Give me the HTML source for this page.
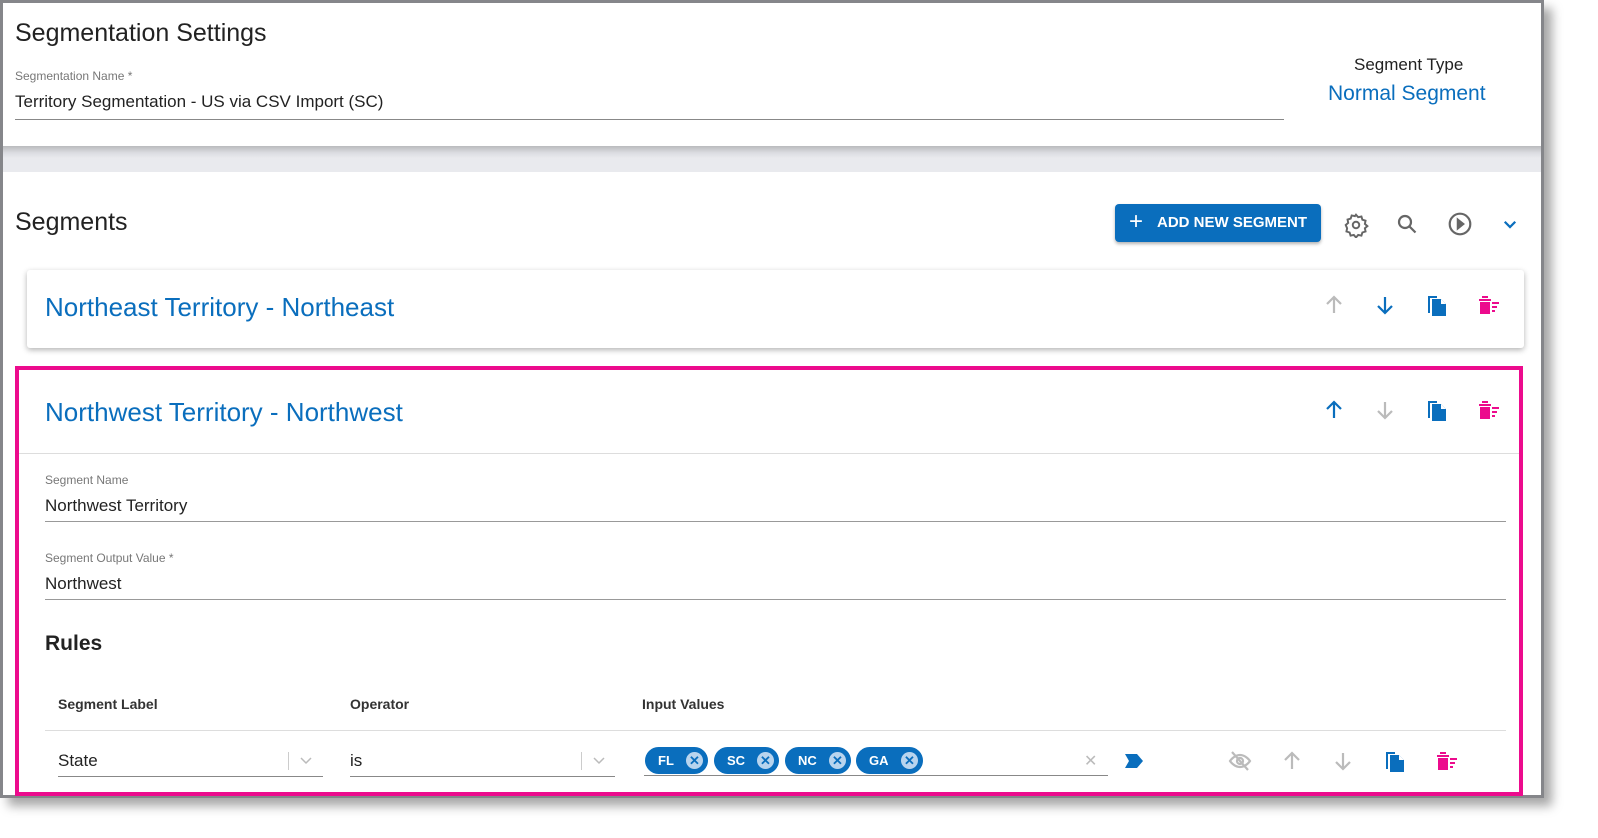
<!DOCTYPE html>
<html style="width:1598px;height:838px;overflow:hidden"><head><style>
*{box-sizing:border-box;margin:0;padding:0}
html,body{width:1598px;height:838px;overflow:hidden}
body{background:#fff;font-family:"Liberation Sans",sans-serif;position:relative;color:#222}
.frame{position:absolute;left:0;top:0;width:1544px;height:798px;border:3px solid #85868a;background:#fff;box-shadow:8px 8px 10px rgba(0,0,0,.35)}
.abs{position:absolute}
.band{position:absolute;left:0;top:143px;width:1538px;height:26px;background:linear-gradient(#b9babd 0,#dcdde2 7px,#e9eaee 12px)}
.lbl{font-size:12px;color:#777}
.val{font-size:17px;color:#222}
.line{position:absolute;height:1px;background:#888}
.blue{color:#0a6ebd}
.card{position:absolute;left:27px;top:270px;width:1497px;height:78px;background:#fff;box-shadow:0 2px 6px rgba(0,0,0,.3);border-radius:3px}
.pink{position:absolute;left:15px;top:366px;width:1508px;height:430px;border:4px solid #ec0b8d}
.chip{position:absolute;top:747px;height:27px;border-radius:14px;background:#0a6ebd;color:#fff;font-size:13px;font-weight:bold;padding-left:13px;line-height:27px}
.chip i{position:absolute;right:5px;top:5px;width:17px;height:17px;border-radius:50%;background:#b8d4ee;color:#0a6ebd;font-style:normal;font-size:13px;line-height:17px;text-align:center}
</style></head><body>
<div class="frame">
<div class="abs" style="left:12px;top:16px;font-size:25px;color:#222">Segmentation Settings</div>
<div class="abs lbl" style="left:12px;top:66px">Segmentation Name *</div>
<div class="abs val" style="left:12px;top:89px">Territory Segmentation - US via CSV Import (SC)</div>
<div class="line" style="left:12px;top:116px;width:1269px"></div>
<div class="abs" style="left:1351px;top:52px;font-size:17px">Segment Type</div>
<div class="abs blue" style="left:1325px;top:79px;font-size:21px">Normal Segment</div>
<div class="band"></div>
<div class="abs" style="left:12px;top:205px;font-size:25px">Segments</div>
<div class="abs" style="left:1112px;top:201px;width:206px;height:38px;background:#0a6ebd;border-radius:4px;color:#fff;font-weight:bold;font-size:15px;line-height:38px;padding-left:42px;box-shadow:0 2px 3px rgba(0,0,0,.3)">ADD NEW SEGMENT<span style="position:absolute;left:14px;top:-1px;font-size:24px;font-weight:normal">+</span></div>
<svg class="abs" style="left:1340px;top:209px" width="26" height="26" viewBox="0 0 24 24" fill="none" stroke="#666" stroke-width="1.8"><circle cx="12" cy="12" r="3"/><path d="M12 2.5l2 2.3 3-.6.9 2.9 2.9.9-.6 3 2.3 2-2.3 2 .6 3-2.9.9-.9 2.9-3-.6-2 2.3-2-2.3-3 .6-.9-2.9-2.9-.9.6-3L2.5 12l2.3-2-.6-3 2.9-.9.9-2.9 3 .6z"/></svg>
<svg class="abs" style="left:1392px;top:209px" width="24" height="24" viewBox="0 0 24 24" fill="none" stroke="#666" stroke-width="2.2"><circle cx="10" cy="10" r="6"/><path d="M14.5 14.5l6 6"/></svg>
<svg class="abs" style="left:1444px;top:208px" width="26" height="26" viewBox="0 0 24 24" fill="none" stroke="#666" stroke-width="2"><circle cx="12" cy="12" r="9.5"/><path d="M10 8l5 4-5 4z" fill="#666"/></svg>
<svg class="abs" style="left:1498px;top:212px" width="18" height="18" viewBox="0 0 24 24" fill="none" stroke="#0a6ebd" stroke-width="3"><path d="M5 9l7 7 7-7"/></svg>
</div>

<div class="card">
<div class="abs blue" style="left:18px;top:22px;font-size:26px">Northeast Territory - Northeast</div>
</div>
<div class="pink"></div>
<div class="abs blue" style="left:45px;top:397px;font-size:26px">Northwest Territory - Northwest</div>
<div class="abs" style="left:19px;top:453px;width:1500px;height:1px;background:#ddd"></div>
<div class="abs lbl" style="left:45px;top:473px">Segment Name</div>
<div class="abs val" style="left:45px;top:496px">Northwest Territory</div>
<div class="line" style="left:45px;top:521px;width:1461px;background:#999"></div>
<div class="abs lbl" style="left:45px;top:551px">Segment Output Value *</div>
<div class="abs val" style="left:45px;top:574px">Northwest</div>
<div class="line" style="left:45px;top:599px;width:1461px;background:#999"></div>
<div class="abs" style="left:45px;top:632px;font-size:21px;font-weight:bold;color:#222">Rules</div>
<div class="abs" style="left:58px;top:696px;font-size:14px;font-weight:bold;color:#333">Segment Label</div>
<div class="abs" style="left:350px;top:696px;font-size:14px;font-weight:bold;color:#333">Operator</div>
<div class="abs" style="left:642px;top:696px;font-size:14px;font-weight:bold;color:#333">Input Values</div>
<div class="abs" style="left:45px;top:730px;width:1461px;height:1px;background:#ddd"></div>
<div class="abs val" style="left:58px;top:751px">State</div>
<div class="abs" style="left:288px;top:752px;width:1px;height:18px;background:#ccc"></div>
<svg class="abs" style="left:299px;top:755px" width="14" height="10" viewBox="0 0 14 10" fill="none" stroke="#bbb" stroke-width="1.5"><path d="M2 3l5 5 5-5"/></svg>
<div class="line" style="left:58px;top:776px;width:265px"></div>
<div class="abs val" style="left:350px;top:751px">is</div>
<div class="abs" style="left:581px;top:752px;width:1px;height:18px;background:#ccc"></div>
<svg class="abs" style="left:592px;top:755px" width="14" height="10" viewBox="0 0 14 10" fill="none" stroke="#bbb" stroke-width="1.5"><path d="M2 3l5 5 5-5"/></svg>
<div class="line" style="left:350px;top:776px;width:265px"></div>
<div class="chip" style="left:645px;width:63px">FL<i>✕</i></div>
<div class="chip" style="left:714px;width:65px">SC<i>✕</i></div>
<div class="chip" style="left:785px;width:66px">NC<i>✕</i></div>
<div class="chip" style="left:856px;width:67px">GA<i>✕</i></div>
<div class="abs" style="left:1084px;top:751px;color:#bbb;font-size:16px">✕</div>
<div class="line" style="left:644px;top:775px;width:464px"></div>
<svg class="abs" style="left:1124px;top:753px" width="20" height="16" viewBox="0 0 20 16"><path d="M1 1h12l6 7-6 7H1l4-7z" fill="#0a6ebd"/></svg>
<svg class="abs" style="left:1228px;top:749px" width="24" height="24" viewBox="0 0 24 24" fill="none" stroke="#bbb" stroke-width="2.2"><path d="M2 12s4-6 10-6 10 6 10 6-4 6-10 6S2 12 2 12z"/><circle cx="12" cy="12" r="3"/><path d="M4 3l16 18"/></svg>

<svg width="0" height="0" style="position:absolute;left:0;top:0"><defs>
<symbol id="up" viewBox="0 0 24 24"><path d="M12 20V5M5 11l7-7 7 7" fill="none" stroke="currentColor" stroke-width="2.2"/></symbol>
<symbol id="dn" viewBox="0 0 24 24"><path d="M12 4v15M5 13l7 7 7-7" fill="none" stroke="currentColor" stroke-width="2.2"/></symbol>
<symbol id="cp" viewBox="0 0 24 24"><path d="M3 3h9v2H5v15H3z M7 6h9l5 5v12H7z" fill="#0a6ebd"/><path d="M16 6v5h5" fill="#fff"/></symbol>
<symbol id="del" viewBox="0 0 24 24"><path d="M2 6h12v2H2z M5 3h6v2H5z M3 9h10v12H3z M15 9h7v2h-7z M15 13h5v2h-5z M15 17h3v2h-3z" fill="#ec0b8d"/></symbol>
</defs></svg>
<svg class="abs" style="left:1322px;top:293px;color:#bbb" width="24" height="24"><use href="#up"/></svg>
<svg class="abs" style="left:1373px;top:293px;color:#0a6ebd" width="24" height="24"><use href="#dn"/></svg>
<svg class="abs" style="left:1425px;top:293px" width="24" height="24"><use href="#cp"/></svg>
<svg class="abs" style="left:1477px;top:293px" width="24" height="24"><use href="#del"/></svg>
<svg class="abs" style="left:1322px;top:398px;color:#0a6ebd" width="24" height="24"><use href="#up"/></svg>
<svg class="abs" style="left:1373px;top:398px;color:#bbb" width="24" height="24"><use href="#dn"/></svg>
<svg class="abs" style="left:1425px;top:398px" width="24" height="24"><use href="#cp"/></svg>
<svg class="abs" style="left:1477px;top:398px" width="24" height="24"><use href="#del"/></svg>
<svg class="abs" style="left:1280px;top:749px;color:#bbb" width="24" height="24"><use href="#up"/></svg>
<svg class="abs" style="left:1331px;top:749px;color:#bbb" width="24" height="24"><use href="#dn"/></svg>
<svg class="abs" style="left:1383px;top:749px" width="24" height="24"><use href="#cp"/></svg>
<svg class="abs" style="left:1435px;top:749px" width="24" height="24"><use href="#del"/></svg>
</body></html>
